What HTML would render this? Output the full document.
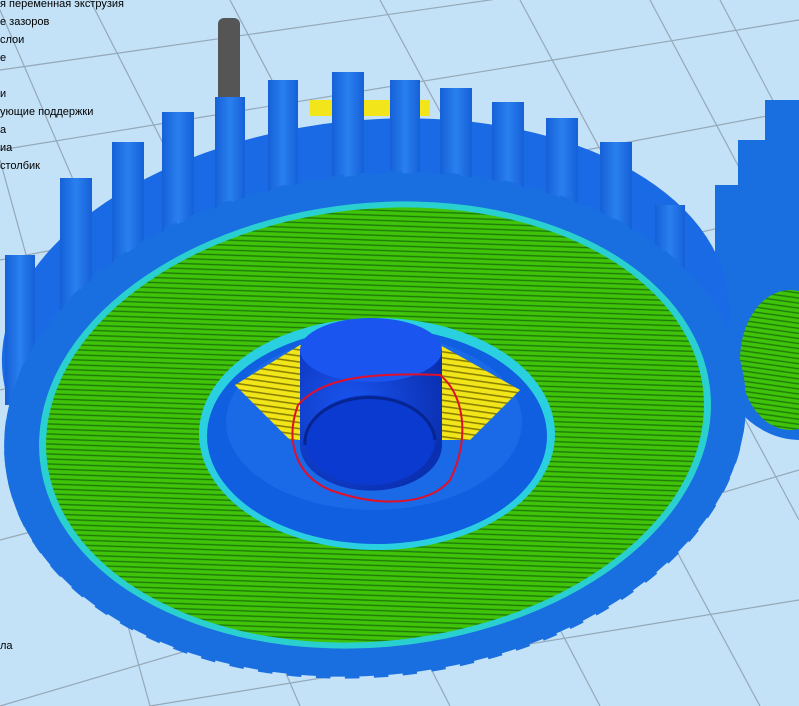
<!DOCTYPE html>
<html><head><meta charset="utf-8"><style>
html,body{margin:0;padding:0;width:799px;height:706px;overflow:hidden;background:#c3e1f7}
svg{position:absolute;left:0;top:0}
.t{position:absolute;left:0;font:11px "Liberation Sans","DejaVu Sans",sans-serif;color:#000;white-space:nowrap}
</style></head><body>
<svg width="799" height="706" viewBox="0 0 799 706">
<defs>
<pattern id="st" width="40" height="5" patternUnits="userSpaceOnUse" patternTransform="rotate(8)">
<rect width="40" height="5" fill="#3fc40a"/><rect y="3.3" width="40" height="1.4" fill="#1f7a08"/></pattern>
<pattern id="ys" width="40" height="6" patternUnits="userSpaceOnUse" patternTransform="rotate(8)">
<rect width="40" height="6" fill="#f2e61a"/><rect y="4" width="40" height="1.6" fill="#8a8000"/></pattern>
<radialGradient id="cy" cx="0.35" cy="0.4" r="0.7"><stop offset="0" stop-color="#1a55f0"/><stop offset="1" stop-color="#0a2fb0"/></radialGradient>
<linearGradient id="wall" x1="0" y1="0" x2="1" y2="0"><stop offset="0" stop-color="#1560d8"/><stop offset=".5" stop-color="#2a80ee"/><stop offset="1" stop-color="#1560d8"/></linearGradient>
</defs>
<g stroke="#8a9aa8" stroke-width="1.2" opacity=".8">
<line x1="0" y1="70" x2="560" y2="-10"/><line x1="0" y1="150" x2="799" y2="20"/><line x1="0" y1="260" x2="799" y2="110"/>
<line x1="0" y1="390" x2="799" y2="210"/><line x1="0" y1="540" x2="799" y2="330"/><line x1="0" y1="706" x2="799" y2="470"/>
<line x1="150" y1="706" x2="799" y2="600"/>
<line x1="0" y1="10" x2="300" y2="706"/><line x1="90" y1="0" x2="450" y2="706"/><line x1="230" y1="0" x2="600" y2="706"/>
<line x1="380" y1="0" x2="760" y2="706"/><line x1="520" y1="0" x2="799" y2="520"/><line x1="650" y1="0" x2="799" y2="280"/>
<line x1="0" y1="160" x2="150" y2="706"/><line x1="720" y1="0" x2="799" y2="150"/>
</g>
<rect x="218" y="18" width="22" height="100" rx="6" fill="#555"/>
<g fill="#1a6fe0">
<ellipse cx="800" cy="330" rx="90" ry="110"/>
<rect x="715" y="185" width="28" height="140"/><rect x="765" y="100" width="34" height="160"/><rect x="738" y="140" width="28" height="140"/>
</g>
<ellipse cx="790" cy="360" rx="50" ry="70" fill="url(#st)"/>
<ellipse cx="375" cy="335" rx="365" ry="215" fill="#1a6ae6" transform="rotate(-6 375 425)"/>
<rect x="310" y="100" width="120" height="16" fill="#f2e61a"/>
<g fill="url(#wall)">
<rect x="5" y="255" width="30" height="150"/><rect x="60" y="178" width="32" height="180"/><rect x="112" y="142" width="32" height="170"/>
<rect x="162" y="112" width="32" height="150"/><rect x="215" y="97" width="30" height="130"/><rect x="268" y="80" width="30" height="130"/>
<rect x="332" y="72" width="32" height="120"/><rect x="390" y="80" width="30" height="110"/><rect x="440" y="88" width="32" height="110"/>
<rect x="492" y="102" width="32" height="120"/><rect x="546" y="118" width="32" height="120"/><rect x="600" y="142" width="32" height="130"/>
<rect x="655" y="205" width="30" height="110"/>
</g>
<ellipse cx="375" cy="425" rx="372" ry="250" fill="#1a6fe0" transform="rotate(-6 375 425)"/>
<ellipse cx="375" cy="425" rx="352" ry="232" fill="none" stroke="#1a6fe0" stroke-width="40" stroke-dasharray="14 14" transform="rotate(-6 375 425)"/>
<ellipse cx="375" cy="425" rx="337" ry="222" fill="#2ad0d0" transform="rotate(-6 375 425)"/>
<ellipse cx="375" cy="425" rx="330" ry="216" fill="url(#st)" transform="rotate(-6 375 425)"/>
<ellipse cx="377" cy="434" rx="178" ry="116" fill="#2ad0e0"/>
<ellipse cx="377" cy="436" rx="170" ry="108" fill="#0f5fe0"/>
<ellipse cx="374" cy="422" rx="148" ry="88" fill="#1a6ae8"/>
<path d="M235 385 L300 345 L440 345 L520 390 L470 440 L290 440 Z" fill="url(#ys)"/>
<path d="M300 350 L300 445 A70 45 0 0 0 442 445 L442 350 Z" fill="url(#cy)"/>
<ellipse cx="371" cy="350" rx="71" ry="32" fill="#1a55f0"/>
<ellipse cx="370" cy="440" rx="65" ry="45" fill="#0a3ad0"/>
<path d="M305 445 A65 45 0 0 1 435 440" fill="none" stroke="#062590" stroke-width="3"/>
<path d="M298 405 C320 380 360 372 440 375 C465 395 470 440 450 480 C430 505 380 508 330 490 C295 475 285 440 298 405" fill="none" stroke="#e0102a" stroke-width="2"/>
</svg>
<div class="t" style="top:-2px">я переменная экструзия</div>
<div class="t" style="top:16px">е зазоров</div>
<div class="t" style="top:34px">слои</div>
<div class="t" style="top:52px">е</div>
<div class="t" style="top:88px">и</div>
<div class="t" style="top:106px">ующие поддержки</div>
<div class="t" style="top:124px">а</div>
<div class="t" style="top:142px">иа</div>
<div class="t" style="top:160px">столбик</div>
<div class="t" style="top:640px">ла</div>
</body></html>
